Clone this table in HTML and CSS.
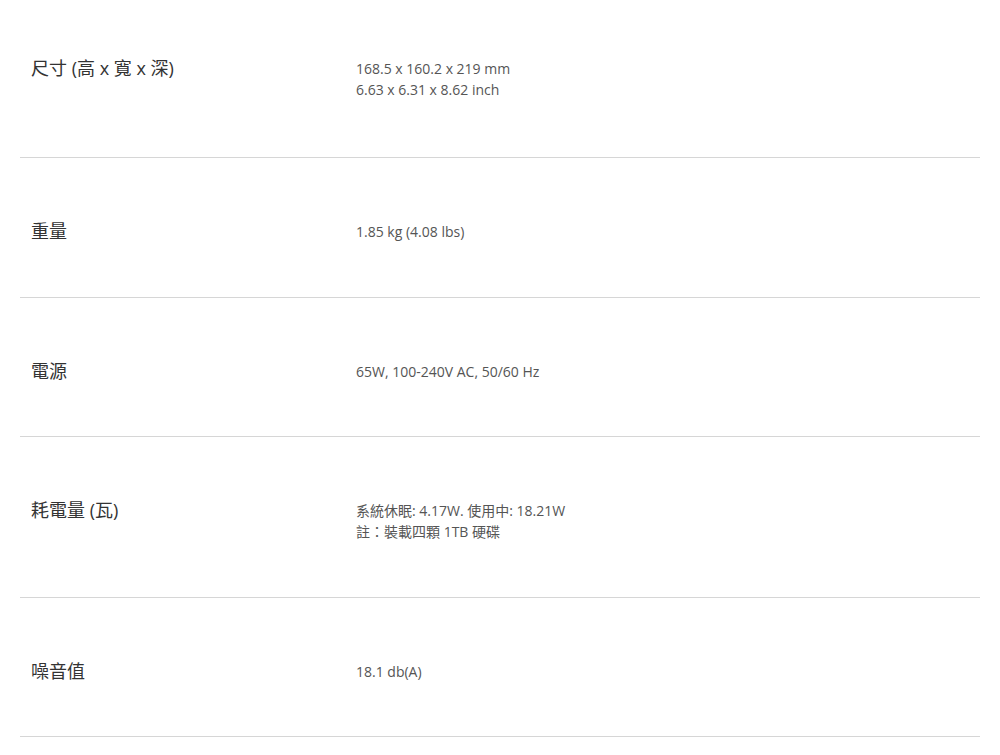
FILE: index.html
```html
<!DOCTYPE html>
<html lang="zh-Hant">
<head>
<meta charset="utf-8">
<link rel="stylesheet" href="styles.css">
</head>
<body>
<div class="specs">
  <div class="row first">
    <div class="label">尺寸 (高 x 寬 x 深)</div>
    <div class="value">168.5 x 160.2 x 219 mm<br>6.63 x 6.31 x 8.62 inch</div>
  </div>
  <div class="row">
    <div class="label">重量</div>
    <div class="value">1.85 kg (4.08 lbs)</div>
  </div>
  <div class="row">
    <div class="label">電源</div>
    <div class="value">65W, 100-240V AC, 50/60 Hz</div>
  </div>
  <div class="row">
    <div class="label">耗電量 (瓦)</div>
    <div class="value">系統休眠: 4.17W. 使用中: 18.21W<br>註：裝載四顆 1TB 硬碟</div>
  </div>
  <div class="row">
    <div class="label">噪音值</div>
    <div class="value">18.1 db(A)</div>
  </div>
</div>
</body>
</html>
```
FILE: styles.css
```css
html, body {
  margin: 0;
  padding: 0;
  background: #ffffff;
}
.specs {
  margin: 0 20px;
}
.row {
  display: flex;
  align-items: flex-start;
  padding: 63px 0 54.5px;
  border-bottom: 1px solid #d6d6d6;
}
.row.first {
  padding-top: 58px;
  padding-bottom: 57px;
}
.label {
  width: 325px;
  padding-left: 11px;
  font-family: "Open Sans", "Noto Sans CJK TC", sans-serif;
  font-size: 18px;
  line-height: 21px;
  color: #333333;
}
.value {
  font-family: "Open Sans", "Noto Sans CJK TC", sans-serif;
  font-size: 14px;
  line-height: 21px;
  color: #555555;
}
```
